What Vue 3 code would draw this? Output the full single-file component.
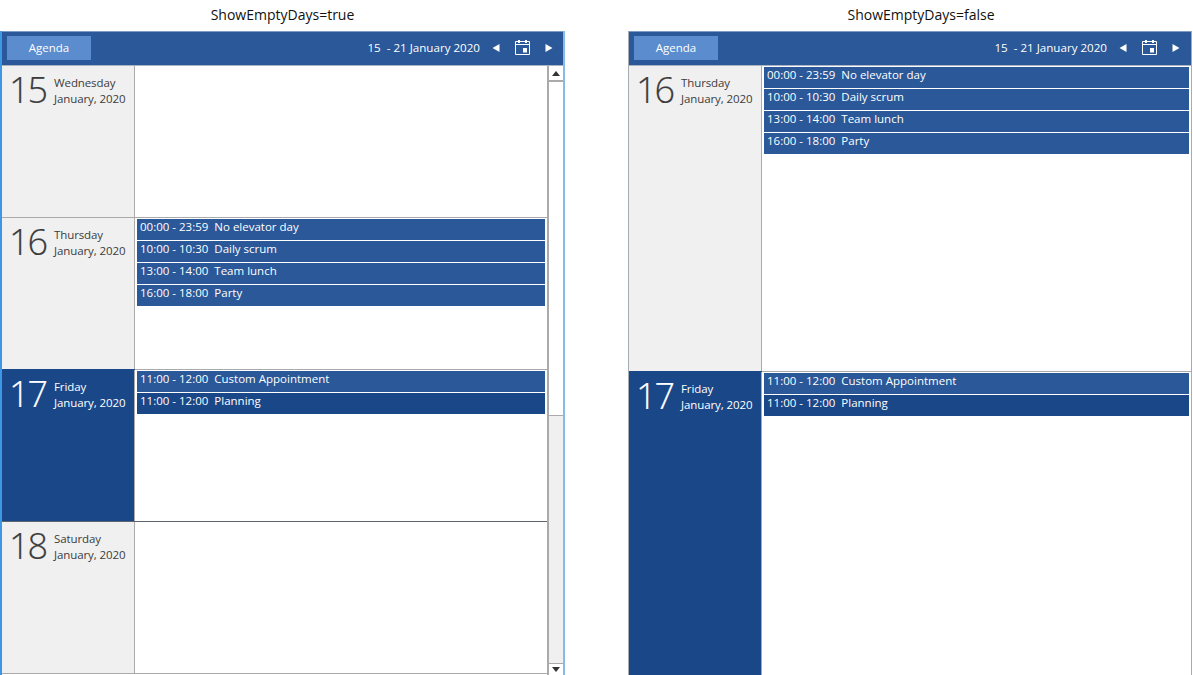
<script setup>
const dayEvents = {
  16: [
    { time: '00:00 - 23:59', title: 'No elevator day' },
    { time: '10:00 - 10:30', title: 'Daily scrum' },
    { time: '13:00 - 14:00', title: 'Team lunch' },
    { time: '16:00 - 18:00', title: 'Party' }
  ],
  17: [
    { time: '11:00 - 12:00', title: 'Custom Appointment' },
    { time: '11:00 - 12:00', title: 'Planning', dark: true }
  ]
}
const names = { 15: 'Wednesday', 16: 'Thursday', 17: 'Friday', 18: 'Saturday' }
const makeDay = (n) => ({ num: n, name: names[n], events: dayEvents[n] || [], selected: n === 17 })
const panels = [
  { id: 'a', title: 'ShowEmptyDays=true', days: [15, 16, 17, 18].map(makeDay), scroll: true, range: '15  - 21 January 2020' },
  { id: 'b', title: 'ShowEmptyDays=false', days: [16, 17].map(makeDay), scroll: false, range: '15  - 21 January 2020' }
]
</script>

<template>
  <div class="page">
    <section v-for="p in panels" :key="p.id" class="col" :class="'col-' + p.id">
      <h2 class="title">{{ p.title }}</h2>
      <div class="panel" :class="{ focused: p.scroll }">
        <header class="bar">
          <div class="agenda">Agenda</div>
          <div class="nav">
            <span class="range">{{ p.range }}</span>
            <svg class="tri" width="8" height="8" viewBox="0 0 8 8"><path d="M7.5 0v8L0.5 4z" fill="#fff" /></svg>
            <svg class="cal" width="15" height="15" viewBox="0 0 15 15">
              <path d="M.5 1.5h14v13H.5z" fill="none" stroke="#fff" />
              <path d="M.5 4.5h14" stroke="#fff" stroke-width="1" />
              <path d="M3 0h2v3H3zM10 0h2v3h-2z" fill="#fff" />
              <path d="M8 8h4v4.5H8z" fill="#fff" />
            </svg>
            <svg class="tri" width="8" height="8" viewBox="0 0 8 8"><path d="M.5 0v8L7.5 4z" fill="#fff" /></svg>
          </div>
        </header>
        <div class="body">
          <div class="rows">
            <div v-for="d in p.days" :key="d.num" class="row" :class="{ selected: d.selected }">
              <div class="day">
                <span class="num">{{ d.num }}</span>
                <div class="label">
                  <div>{{ d.name }}</div>
                  <div>January, 2020</div>
                </div>
              </div>
              <div class="events">
                <div v-for="e in d.events" :key="e.title" class="event" :class="{ dark: e.dark }">
                  <span class="time">{{ e.time }}</span>
                  <span>{{ e.title }}</span>
                </div>
              </div>
            </div>
          </div>
          <div v-if="p.scroll" class="scrollbar">
            <div class="sb-btn up"><svg width="8" height="5" viewBox="0 0 8 5"><path d="M4 0l4 5H0z" fill="#333" /></svg></div>
            <div class="thumb"></div>
            <div class="track"></div>
            <div class="sb-btn down"><svg width="8" height="5" viewBox="0 0 8 5"><path d="M0 0h8L4 5z" fill="#333" /></svg></div>
          </div>
        </div>
      </div>
    </section>
  </div>
</template>

<style>
html, body { margin: 0; background: #fff; overflow: hidden; }
</style>

<style scoped>
.page {
  display: flex;
  gap: 63px;
  width: 1193px;
  height: 675px;
  overflow: hidden;
  font-family: "Open Sans", "Noto Sans", "Liberation Sans", sans-serif;
  background: #fff;
}
.col { display: flex; flex-direction: column; height: 675px; flex: none; }
.col-a { width: 565px; }
.col-b { width: 564px; }
.title {
  margin: 0;
  height: 31px;
  line-height: 30px;
  font-size: 14px;
  font-weight: 400;
  color: #111;
  text-align: center;
}
.col-b .title { padding-left: 22px; }
.panel {
  flex: 1;
  min-height: 0;
  display: flex;
  flex-direction: column;
  box-sizing: border-box;
  border-left: 1px solid #a6acb3;
  border-right: 1px solid #a6acb3;
  overflow: hidden;
}
.panel.focused { border-left: 2px solid #3d97e6; border-right: 2px solid #86bbe8; }
.bar {
  height: 35px;
  flex: none;
  box-sizing: border-box;
  background: #2a5899;
  border-top: 1px solid #7d9cc4;
  border-bottom: 1px solid #aab4c0;
  padding: 4px 11px 0 5px;
  display: flex;
  justify-content: space-between;
  color: #fff;
}
.focused .bar { padding-right: 10px; }
.agenda {
  width: 84px;
  height: 24px;
  background: #5b8cce;
  text-align: center;
  line-height: 24px;
  font-size: 11.5px;
}
.nav { display: flex; align-items: center; height: 25px; margin-top: -1px; }
.range { font-size: 11.6px; white-space: pre; margin-right: 12px; }
.cal { margin: 0 15px; }
.body { flex: 1; min-height: 0; display: flex; background: #fff; }
.rows { flex: 1; min-width: 0; display: flex; flex-direction: column; }
.row {
  height: 152px;
  flex: none;
  box-sizing: border-box;
  display: flex;
  border-bottom: 1px solid #aaa;
}
.col-b .row { height: 306px; }
.col-b .row.selected { height: 320px; }
.row.selected { border-bottom-color: #5c6470; }
.day {
  width: 133px;
  flex: none;
  box-sizing: border-box;
  background: #f0f0f0;
  border-right: 1px solid #aaa;
  display: flex;
  padding: 1px 0 0 7px;
  color: #3c3c3c;
}
.row.selected .day {
  background: #1a4788;
  color: #fff;
  box-shadow: 0 -1px 0 #1a4788;
}
.num {
  font-size: 36px;
  font-weight: 300;
  line-height: 46px;
  width: 45px;
  letter-spacing: -2px;
  -webkit-text-stroke: 0.2px currentColor;
}
.label {
  font-size: 11.5px;
  line-height: 16px;
  letter-spacing: -0.1px;
  padding-top: 8px;
  white-space: nowrap;
}
.events { flex: 1; min-width: 0; padding: 1px 2px 0 2px; display: flex; flex-direction: column; gap: 1px; }
.event {
  height: 21px;
  flex: none;
  box-sizing: border-box;
  background: #2a5899;
  color: #fff;
  font-size: 11.5px;
  line-height: 15px;
  padding-left: 3px;
  white-space: pre;
}
.event.dark { background: #1a4788; }
.time { margin-right: 6px; }
.scrollbar {
  width: 16px;
  flex: none;
  box-sizing: border-box;
  display: flex;
  flex-direction: column;
  background: #f0f0f0;
  border-left: 2px solid #aaa;
}
.sb-btn {
  height: 16px;
  flex: none;
  box-sizing: border-box;
  background: #fff;
  display: flex;
  align-items: center;
  justify-content: center;
}
.sb-btn.up { border-bottom: 2px solid #aaa; }
.sb-btn.down { border-top: 1px solid #aaa; height: 12px; }
.thumb {
  height: 334px;
  flex: none;
  box-sizing: border-box;
  background: #fff;
  border-bottom: 1px solid #aaa;
}
.track { flex: 1; }
</style>
